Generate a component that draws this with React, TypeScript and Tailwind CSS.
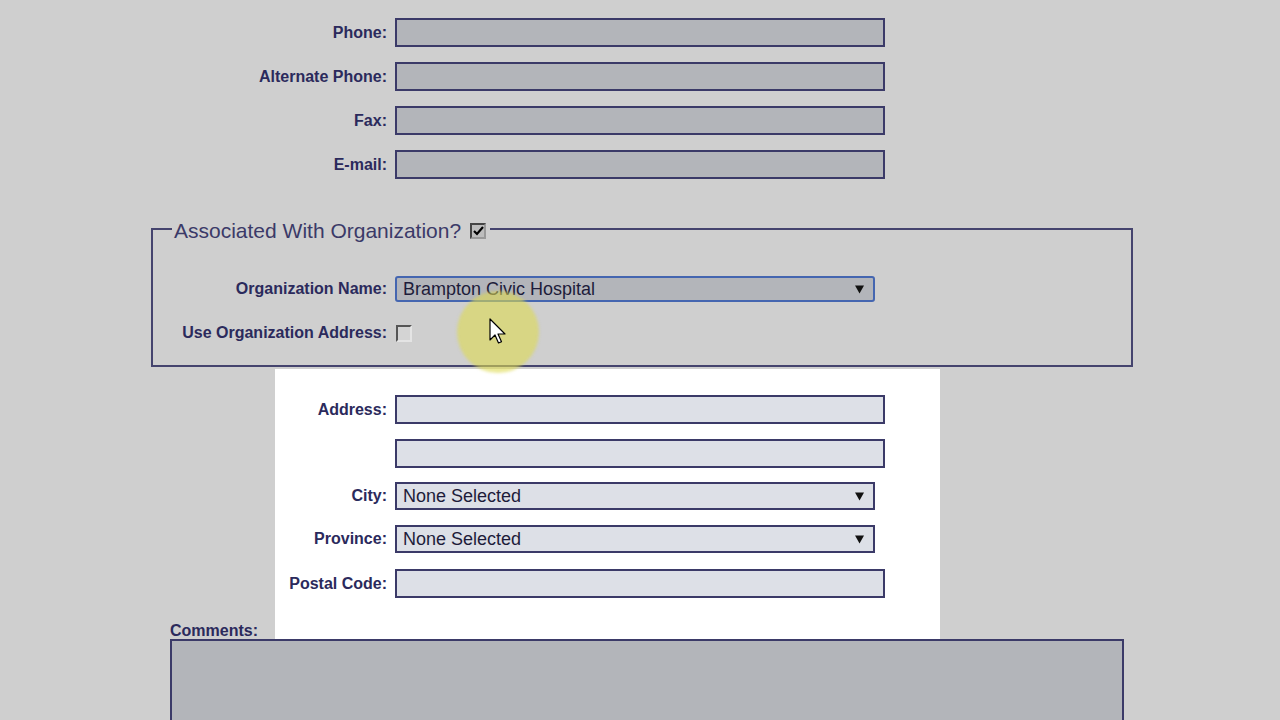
// Contact form: phone block, organization fieldset, address panel, comments
const label = "text-[16px] font-bold text-[#2b2a5c] text-right pr-[8px] shrink-0";
const grayInput = "h-[29px] w-[490px] border-2 border-[#3b3a68] bg-[#b3b5ba]";
const lightInput = "h-[29px] w-[490px] border-2 border-[#3b3a68] bg-[#dde0e7]";

function Arrow() {
  return (
    <svg width="9" height="9" viewBox="0 0 9 9" className="mt-[1px] shrink-0">
      <path d="M0 0.5 H9 L4.5 8.5 Z" fill="#111" />
    </svg>
  );
}

function Row({ text, width, children }: { text?: string; width: string; children: React.ReactNode }) {
  return (
    <div className="flex items-center">
      <div className={`${label} ${width}`}>{text}</div>
      {children}
    </div>
  );
}

function Select({ value, focused }: { value: string; focused?: boolean }) {
  return (
    <div
      className={`flex w-[480px] items-center justify-between pl-[6px] pr-[9px] text-[18px] leading-[20px] text-[#1d1c3a] ${
        focused
          ? "h-[26px] rounded-[3px] border-2 border-[#4566b0] bg-[#b3b5ba]"
          : "h-[28px] border-2 border-[#3b3a68] bg-[#dde0e7]"
      }`}
    >
      <span>{value}</span>
      <Arrow />
    </div>
  );
}

export default function App() {
  return (
    <div
      className="relative h-[720px] w-full overflow-hidden bg-[#cfcfcf]"
      style={{ fontFamily: '"Liberation Sans", Arial, sans-serif' }}
    >
      {/* contact numbers */}
      <div className="flex flex-col gap-[15px] pt-[18px]">
        {["Phone:", "Alternate Phone:", "Fax:", "E-mail:"].map((t) => (
          <Row key={t} text={t} width="w-[395px]">
            <div className={grayInput} />
          </Row>
        ))}
      </div>

      {/* organization */}
      <fieldset className="ml-[151px] mt-[38px] w-[982px] border-2 border-[#45446e] pb-[20px]">
        <legend className="ml-[19px] pl-[2px] pr-[4px] text-[21px] leading-[24px] text-[#3b3a68]">
          <span className="flex translate-y-[2px] items-center gap-[9px]">
            <span>Associated With Organization?</span>
            <span className="flex h-[16px] w-[16px] items-center justify-center border-2 border-t-[#444] border-l-[#444] border-b-[#999] border-r-[#999] bg-[#bdbdbd]">
              <svg width="11" height="10" viewBox="0 0 11 10">
                <path d="M1 5 L4 8 L10 1" stroke="#000" strokeWidth="2.2" fill="none" />
              </svg>
            </span>
          </span>
        </legend>
        <div className="mt-[35px] flex flex-col gap-[19px]">
          <Row text="Organization Name:" width="w-[242px]">
            <Select value="Brampton Civic Hospital" focused />
          </Row>
          <Row text="Use Organization Address:" width="w-[242px]">
            <span className="ml-[1px] h-[17px] w-[16px] border-2 border-t-[#555] border-l-[#555] border-b-[#e4e4e4] border-r-[#e4e4e4] bg-[#d4d4d4]" />
          </Row>
        </div>
      </fieldset>

      {/* address + comments label */}
      <div className="mt-[2px] flex h-[270px]">
        <div className="flex w-[275px] items-end pl-[170px]">
          <span className="text-[16px] font-bold leading-[16px] text-[#2b2a5c]">Comments:</span>
        </div>
        <div className="flex w-[665px] flex-col bg-white pt-[26px]">
          <Row text="Address:" width="w-[120px]">
            <div className={lightInput} />
          </Row>
          <div className="mt-[15px] flex">
            <div className="w-[120px]" />
            <div className={lightInput} />
          </div>
          <div className="mt-[14px]">
            <Row text="City:" width="w-[120px]">
              <Select value="None Selected" />
            </Row>
          </div>
          <div className="mt-[15px]">
            <Row text="Province:" width="w-[120px]">
              <Select value="None Selected" />
            </Row>
          </div>
          <div className="mt-[16px]">
            <Row text="Postal Code:" width="w-[120px]">
              <div className={lightInput} />
            </Row>
          </div>
        </div>
      </div>

      <div className="ml-[170px] h-[120px] w-[954px] border-2 border-[#3b3a68] bg-[#b3b5ba]" />

      {/* cursor highlight */}
      <div className="pointer-events-none absolute left-[457px] top-[291px] h-[82px] w-[82px] rounded-full bg-[#dedb52]/60 blur-[1.5px]" />
      <svg className="pointer-events-none absolute left-[489px] top-[318px]" width="18" height="28" viewBox="0 0 18 28">
        <path d="M1 1 L1 22 L6 17 L9.5 25 L12.5 23.7 L9 16 L16 16 Z" fill="#fff" stroke="#000" strokeWidth="1.2" strokeLinejoin="round" />
      </svg>
    </div>
  );
}
